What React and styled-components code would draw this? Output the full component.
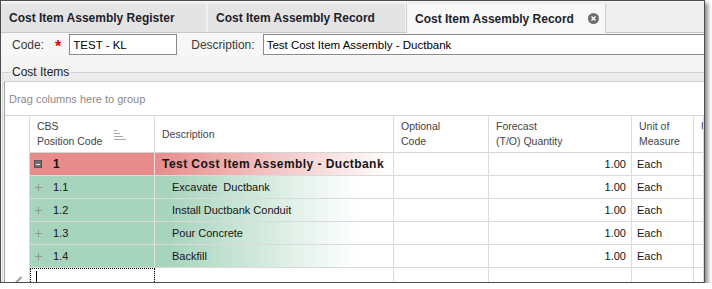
import React from "react";
import styled, { createGlobalStyle } from "styled-components";

const GlobalStyle = createGlobalStyle`
  html, body {
    margin: 0;
    padding: 0;
    background: #ffffff;
  }
  body {
    font-family: "Liberation Sans", Arial, sans-serif;
  }
`;

const COLS = "25px 125px 239px 95px 143px 62px 1fr";

const Window = styled.div`
  width: 705px;
  height: 283px;
  box-sizing: border-box;
  border: 1px solid #4d4d4d;
  box-shadow: 3px 3px 4px rgba(0, 0, 0, 0.45);
  display: flex;
  flex-direction: column;
  overflow: hidden;
  background: #f5f5f5;
`;

const TabBar = styled.div`
  height: 32px;
  box-sizing: border-box;
  display: flex;
  align-items: flex-end;
  background: #efefef;
  border-top: 1px solid #f8f8f8;
  border-bottom: 1px solid #c9c9c9;
`;

const Tab = styled.div`
  width: ${(p) => p.$w}px;
  height: ${(p) => (p.$active ? 29 : 28)}px;
  box-sizing: border-box;
  display: flex;
  align-items: center;
  padding-left: 8px;
  margin-right: ${(p) => p.$gap || 0}px;
  margin-bottom: ${(p) => (p.$active ? -1 : 0)}px;
  background: ${(p) => (p.$active ? "#f8f8f8" : "#e4e4e4")};
  border-left: ${(p) => (p.$active ? "1px solid #cfcfcf" : "none")};
  border-right: ${(p) => (p.$active ? "1px solid #cfcfcf" : "1px solid #f4f4f4")};
  font-size: 12px;
  font-weight: bold;
  color: #1d1f2b;
  white-space: nowrap;
`;

const CloseIcon = styled.svg`
  margin-left: auto;
  margin-right: 6px;
`;

const FormRow = styled.div`
  height: 23px;
  box-sizing: border-box;
  display: flex;
  align-items: center;
  padding-left: 11px;
  background: #f7f7f7;
`;

const Label = styled.span`
  font-size: 12px;
  color: #3a3a3a;
  margin-left: ${(p) => p.$ml || 0}px;
`;

const Required = styled.span`
  color: #e60000;
  font-weight: bold;
  font-size: 16px;
  line-height: 10px;
  margin: 5px 8px 0 11px;
`;

const Input = styled.div`
  height: 21px;
  box-sizing: border-box;
  border: 1px solid #8a8a8a;
  background: #ffffff;
  display: flex;
  align-items: center;
  padding-left: 3px;
  font-size: 11.5px;
  color: #000;
  width: ${(p) => (p.$w ? `${p.$w}px` : "auto")};
  flex: ${(p) => (p.$w ? "none" : 1)};
  margin-left: ${(p) => p.$ml || 0}px;
  margin-right: ${(p) => p.$mr || 0}px;
`;

const Section = styled.div`
  flex: 1;
  min-height: 0;
  padding-top: 9px;
  display: flex;
  flex-direction: column;
`;

const GroupBox = styled.fieldset`
  flex: 1;
  min-height: 0;
  margin: 0 0 0 1px;
  padding: 0 0 0 1px;
  border: none;
  border-top: 1px solid #d2d2d2;
  border-left: 1px solid #dadada;
  background: #ececec;
  display: flex;
  flex-direction: column;
`;

const Legend = styled.legend`
  margin-left: 6px;
  padding: 0 2px;
  font-size: 12px;
  line-height: 14px;
  color: #222;
`;

const Grid = styled.div`
  flex: 1;
  margin-top: 2px;
  background: #ffffff;
  border-left: 1px solid #a6a6a6;
  border-top: 1px solid #cfcfcf;
  overflow: hidden;
`;

const GroupPanel = styled.div`
  height: 34px;
  box-sizing: border-box;
  border-bottom: 1px solid #d4d4d4;
  display: flex;
  align-items: center;
  padding-left: 4px;
  font-size: 11px;
  color: #8a8a8a;
`;

const Row = styled.div`
  display: grid;
  grid-template-columns: ${COLS};
  height: ${(p) => p.$h}px;
`;

const HeadCell = styled.div`
  box-sizing: border-box;
  border-right: 1px solid #dcdcdc;
  border-bottom: ${(p) => (p.$ind ? "none" : "1px solid #d4d4d4")};
  display: flex;
  align-items: center;
  padding-left: 7px;
  font-size: 10.5px;
  line-height: 15px;
  color: #444;
  overflow: hidden;
  white-space: nowrap;
`;

const SortIcon = styled.svg`
  margin-left: 12px;
  margin-top: 2px;
`;

const Cell = styled.div`
  box-sizing: border-box;
  border-right: 1px solid ${(p) => p.$line || "#dcdcdc"};
  border-bottom: ${(p) => (p.$ind ? "none" : "1px solid #dadada")};
  display: flex;
  align-items: center;
  justify-content: ${(p) => (p.$right ? "flex-end" : "flex-start")};
  padding-left: ${(p) => p.$pl || 0}px;
  padding-right: ${(p) => p.$pr || 0}px;
  background: ${(p) => p.$bg || "#ffffff"};
  font-size: 11px;
  color: #151515;
  white-space: pre;
  overflow: hidden;
`;

const BoldText = styled.span`
  font-weight: bold;
  font-size: 12px;
  letter-spacing: 0.45px;
`;

const MinusBox = styled.span`
  width: 8px;
  height: 8px;
  box-sizing: border-box;
  background: #6f6f6f;
  border: 1px solid #555;
  display: flex;
  align-items: center;
  justify-content: center;
  margin-right: 11px;
  &::after {
    content: "";
    width: 4px;
    height: 1px;
    background: #e8e8e8;
  }
`;

const PlusMark = styled.svg`
  margin: 0 11px 0 1px;
`;

const PencilCell = styled(Cell)`
  align-items: flex-start;
  padding-top: 7px;
`;

const EditCell = styled(Cell)`
  outline: 1px dotted #000;
  outline-offset: -1px;
  align-items: flex-start;
  padding-top: 3px;
`;

const Caret = styled.span`
  width: 1px;
  height: 12px;
  background: #000;
`;

const RED = "#e88b8b";
const GREEN = "#a7d4bd";

const items = [
  { code: "1", desc: "Test Cost Item Assembly - Ductbank", parent: true },
  { code: "1.1", desc: "Excavate  Ductbank" },
  { code: "1.2", desc: "Install Ductbank Conduit" },
  { code: "1.3", desc: "Pour Concrete" },
  { code: "1.4", desc: "Backfill" },
];

const Toggle = ({ parent }) =>
  parent ? (
    <MinusBox />
  ) : (
    <PlusMark width="7" height="7" viewBox="0 0 7 7">
      <path d="M3.5 0v7M0 3.5h7" stroke="#8d9a94" strokeWidth="1" />
    </PlusMark>
  );

const DataRow = ({ item }) => {
  const color = item.parent ? RED : GREEN;
  const grad = item.parent
    ? `linear-gradient(to right, ${RED} 0%, #fbeeee 85%, #ffffff 100%)`
    : `linear-gradient(to right, ${GREEN} 5%, #ffffff 85%)`;
  return (
    <Row $h={23}>
      <Cell $ind />
      <Cell $bg={color} $pl={4} $line="#e2e2e2">
        <Toggle parent={item.parent} />
        {item.parent ? <BoldText>{item.code}</BoldText> : item.code}
      </Cell>
      <Cell $bg={grad} $pl={item.parent ? 7 : 17}>
        {item.parent ? <BoldText>{item.desc}</BoldText> : item.desc}
      </Cell>
      <Cell />
      <Cell $right $pr={5}>1.00</Cell>
      <Cell $pl={5}>Each</Cell>
      <Cell />
    </Row>
  );
};

export default function App() {
  return (
    <>
      <GlobalStyle />
      <Window>
        <TabBar>
          <Tab $w={206} $gap={1}>Cost Item Assembly Register</Tab>
          <Tab $w={198}>Cost Item Assembly Record</Tab>
          <Tab $w={200} $active>
            Cost Item Assembly Record
            <CloseIcon width="11" height="11" viewBox="0 0 11 11">
              <circle cx="5.5" cy="5.5" r="5.5" fill="#6e6e6e" />
              <path d="M3.5 3.5l4 4M7.5 3.5l-4 4" stroke="#fff" strokeWidth="1.4" />
            </CloseIcon>
          </Tab>
        </TabBar>

        <FormRow>
          <Label>Code:</Label>
          <Required>*</Required>
          <Input $w={108}>TEST - KL</Input>
          <Label $ml={14}>Description:</Label>
          <Input $ml={8} $mr={-2}>Test Cost Item Assembly - Ductbank</Input>
        </FormRow>

        <Section>
          <GroupBox>
            <Legend>Cost Items</Legend>
            <Grid>
              <GroupPanel>Drag columns here to group</GroupPanel>
              <Row $h={37}>
                <HeadCell $ind />
                <HeadCell>
                  <div>
                    CBS
                    <br />
                    Position Code
                  </div>
                  <SortIcon width="13" height="10" viewBox="0 0 13 10">
                    <path d="M0 0.5h3M0 3.5h6M0 6.5h9M0 9.5h12" stroke="#a8a8a8" strokeWidth="1" />
                  </SortIcon>
                </HeadCell>
                <HeadCell>Description</HeadCell>
                <HeadCell>
                  <div>
                    Optional
                    <br />
                    Code
                  </div>
                </HeadCell>
                <HeadCell>
                  <div>
                    Forecast
                    <br />
                    (T/O) Quantity
                  </div>
                </HeadCell>
                <HeadCell>
                  <div>
                    Unit of
                    <br />
                    Measure
                  </div>
                </HeadCell>
                <HeadCell>
                  <div>
                    U
                    <br />
                    &nbsp;
                  </div>
                </HeadCell>
              </Row>
              {items.map((item) => (
                <DataRow key={item.code} item={item} />
              ))}
              <Row $h={20}>
                <PencilCell $ind $pl={10}>
                  <svg width="8" height="8" viewBox="0 0 8 8">
                    <path d="M1 7.5L6.5 2" stroke="#9a9a9a" strokeWidth="2" />
                  </svg>
                </PencilCell>
                <EditCell $pl={6}>
                  <Caret />
                </EditCell>
                <Cell />
                <Cell />
                <Cell />
                <Cell />
                <Cell />
              </Row>
            </Grid>
          </GroupBox>
        </Section>
      </Window>
    </>
  );
}
